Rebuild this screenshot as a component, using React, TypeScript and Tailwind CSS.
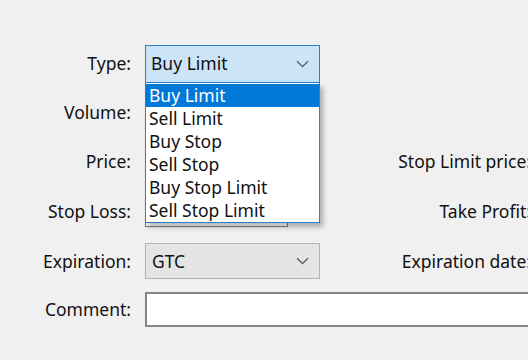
import React from 'react';

const font = { fontFamily: '"Noto Sans", "Open Sans", sans-serif' };

const Chevron = () => (
  <svg width="13" height="8" viewBox="0 0 13 8" className="shrink-0">
    <path d="M1 1.2 L6.5 6.5 L12 1.2" fill="none" stroke="#5f5f5f" strokeWidth="1.3" />
  </svg>
);

const options = ['Buy Limit', 'Sell Limit', 'Buy Stop', 'Sell Stop', 'Buy Stop Limit', 'Sell Stop Limit'];

function Label({ children }: { children: React.ReactNode }) {
  return <div className="w-[132px] shrink-0 pr-[1px] text-right whitespace-nowrap">{children}</div>;
}

function RightLabel({ children }: { children?: React.ReactNode }) {
  return <div className="ml-auto w-[200px] shrink-0 text-right whitespace-nowrap">{children}</div>;
}

export default function App() {
  return (
    <div
      className="w-[528px] h-[360px] overflow-hidden bg-[#f0f0f0] text-[17.5px] leading-[23px] text-[#111]"
      style={font}
    >
      <div className="w-[531px] pt-[39px] flex flex-col">
        {/* Type */}
        <div className="h-[49px] flex items-center">
          <Label>Type:</Label>
          <div className="relative ml-[13px]">
            <div className="w-[175px] h-[38px] flex items-center justify-between pl-[5px] pr-[10px] bg-[#cce4f7] border border-[#2a7fd0]">
              <span>Buy Limit</span>
              <Chevron />
            </div>
            {/* open dropdown list */}
            <div className="absolute left-0 top-[38px] z-10 w-[175px] pt-[1px] bg-white border border-t-0 border-[#2a7fd0] shadow-[3px_4px_5px_rgba(0,0,0,0.28)]">
              {options.map((o, i) => (
                <div
                  key={o}
                  className={`h-[23px] pl-[3px] ${i === 0 ? 'bg-[#0078d7] text-white' : ''}`}
                >
                  {o}
                </div>
              ))}
            </div>
          </div>
          <RightLabel />
        </div>

        {/* Volume */}
        <div className="h-[49px] flex items-center">
          <Label>Volume:</Label>
          <div className="ml-[13px] w-[143px] h-[32px] bg-white border border-[#7a7a7a]" />
          <RightLabel />
        </div>

        {/* Price */}
        <div className="h-[49px] flex items-center">
          <Label>Price:</Label>
          <div className="ml-[13px] w-[143px] h-[32px] bg-white border border-[#7a7a7a]" />
          <RightLabel>Stop Limit price:</RightLabel>
        </div>

        {/* Stop Loss */}
        <div className="h-[50px] flex items-center">
          <Label>Stop Loss:</Label>
          <div className="ml-[13px] w-[143px] h-[32px] bg-white border border-[#7a7a7a]" />
          <RightLabel>Take Profit:</RightLabel>
        </div>

        {/* Expiration */}
        <div className="h-[50px] flex items-center">
          <Label>Expiration:</Label>
          <div className="ml-[13px] w-[175px] h-[36px] flex items-center justify-between pl-[6px] pr-[10px] bg-[#e5e5e5] border border-[#b3b3b3]">
            <span>GTC</span>
            <Chevron />
          </div>
          <RightLabel>Expiration date:</RightLabel>
        </div>

        {/* Comment */}
        <div className="h-[46px] flex items-center">
          <Label>Comment:</Label>
          <div className="ml-[13px] flex-1 h-[35px] bg-white border-2 border-[#858585]" />
        </div>
      </div>
    </div>
  );
}
